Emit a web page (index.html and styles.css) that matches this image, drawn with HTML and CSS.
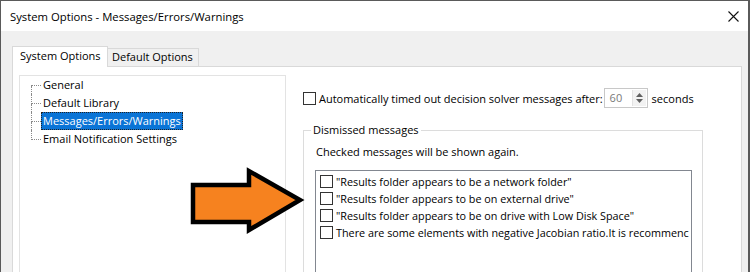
FILE: index.html
```html
<!DOCTYPE html>
<html>
<head>
<meta charset="utf-8">
<link rel="stylesheet" href="styles.css">
</head>
<body>
<div class="window">
  <header class="titlebar">
    <span class="title">System Options - Messages/Errors/Warnings</span>
    <svg class="close" width="11" height="11" viewBox="0 0 11 11"><path d="M0.5 0.5 L10.5 10.5 M10.5 0.5 L0.5 10.5" stroke="#111" stroke-width="1.1" fill="none"/></svg>
  </header>
  <div class="client">
    <div class="tabs">
      <div class="tab active">System Options</div>
      <div class="tab">Default Options</div>
    </div>
    <div class="panel">
      <div class="tree">
        <div class="node first"><span class="conn"><i class="up"></i><i class="down"></i></span><span class="label">General</span></div>
        <div class="node"><span class="conn"><i class="up"></i><i class="down"></i></span><span class="label">Default Library</span></div>
        <div class="node"><span class="conn"><i class="up"></i><i class="down"></i></span><span class="label selected">Messages/Errors/Warnings</span></div>
        <div class="node last"><span class="conn"><i class="up"></i><i class="down"></i></span><span class="label">Email Notification Settings</span></div>
      </div>
      <div class="settings">
        <div class="timeout-row">
          <span class="cb"></span>
          <span class="timeout-text">Automatically timed out decision solver messages after:</span>
          <span class="spin">
            <span class="spin-val">60</span>
            <span class="spin-btn">
              <svg width="7" height="4" viewBox="0 0 7 4"><path d="M0 4 L3.5 0 L7 4 Z" fill="#606060"/></svg>
              <svg width="7" height="4" viewBox="0 0 7 4"><path d="M0 0 L3.5 4 L7 0 Z" fill="#606060"/></svg>
            </span>
          </span>
          <span class="seconds">seconds</span>
        </div>
        <fieldset class="dismissed">
          <legend>Dismissed messages</legend>
          <p class="hint">Checked messages will be shown again.</p>
          <div class="listbox">
            <div class="item"><span class="cb"></span><span class="item-text">"Results folder appears to be a network folder"</span></div>
            <div class="item"><span class="cb"></span><span class="item-text">"Results folder appears to be on external drive"</span></div>
            <div class="item"><span class="cb"></span><span class="item-text">"Results folder appears to be on drive with Low Disk Space"</span></div>
            <div class="item"><span class="cb"></span><span class="item-text">There are some elements with negative Jacobian ratio.It is recommenc</span></div>
          </div>
        </fieldset>
      </div>
    </div>
  </div>
  <svg class="arrow" width="124" height="74" viewBox="0 0 124 74">
    <path d="M7 21 L63 21 L63 7 L114 36 L63 66 L63 58 L7 58 Z" fill="#f6821f" stroke="#000" stroke-width="4.5" stroke-linejoin="miter"/>
  </svg>
</div>
</body>
</html>
```
FILE: styles.css
```css
* { box-sizing: border-box; }
html, body { margin: 0; padding: 0; }
body {
  width: 750px;
  height: 272px;
  overflow: hidden;
  background: #f0f0f0;
  font-family: "Open Sans", "Noto Sans", sans-serif;
  font-size: 11px;
  color: #000;
}
.window {
  position: relative;
  width: 750px;
  height: 272px;
  border-top: 1px solid #5a5a5a;
  border-left: 1px solid #5a5a5a;
  border-right: 2px solid #5a5a5a;
  background: #f0f0f0;
  overflow: hidden;
}
.titlebar {
  height: 30px;
  background: #fff;
  display: flex;
  align-items: center;
  padding-left: 9px;
  padding-right: 9px;
}
.title { font-size: 11.3px; }
.close { margin-left: auto; }
.client {
  padding: 15px 6px 0 11px;
}
.tabs {
  display: flex;
  align-items: flex-end;
  height: 20px;
}
.tab {
  height: 18px;
  width: 91px;
  padding-left: 4px;
  border-top: 1px solid #d9d9d9;
  border-right: 1px solid #d9d9d9;
  background: #f0f0f0;
  line-height: 16px;
  white-space: nowrap;
}
.tab.active {
  position: relative;
  z-index: 1;
  width: 96px;
  height: 21px;
  margin-bottom: -1px;
  padding-left: 7px;
  border-left: 1px solid #d9d9d9;
  background: #fff;
  line-height: 18px;
}
.panel {
  height: 260px;
  border: 1px solid #d9d9d9;
  background: #fff;
  display: grid;
  grid-template-columns: 267px 400px;
  column-gap: 17px;
  align-items: start;
  padding: 8px 0 0 6px;
}
.tree {
  height: 220px;
  border: 1px solid #e3e3e3;
  padding-left: 11px;
}
.node {
  display: flex;
  align-items: center;
  height: 18px;
}
.conn {
  width: 10px;
  height: 18px;
  display: grid;
  grid-template-rows: 10px 8px;
}
.conn i { display: block; }
.conn .up {
  border-left: 1px dotted #8a8a8a;
  border-bottom: 1px dotted #8a8a8a;
}
.conn .down { border-left: 1px dotted #8a8a8a; }
.node.first .conn .up { border-left: none; }
.node.last .conn .down { border-left: none; }
.label {
  padding: 0 2px;
  height: 18px;
  line-height: 17px;
  white-space: nowrap;
}
.label.selected {
  background: #0a74d6;
  color: #fff;
  outline: 1px dotted #222;
  outline-offset: -1px;
}
.timeout-row {
  margin-top: 13px;
  height: 20px;
  display: flex;
  align-items: center;
  white-space: nowrap;
}
.cb {
  flex: none;
  display: inline-block;
  width: 13px;
  height: 13px;
  border: 1px solid #333;
  background: #fff;
}
.timeout-text { margin-left: 3px; letter-spacing: -0.02px; }
.spin {
  margin-left: 1px;
  width: 44px;
  height: 20px;
  border: 1px solid #c8c8c8;
  display: flex;
}
.spin-val {
  flex: 1;
  padding-left: 5px;
  line-height: 17px;
  color: #7a7a7a;
}
.spin-btn {
  width: 14px;
  margin: 1px 1px 1px 0;
  background: #f2f2f2;
  border-left: 1px solid #e2e2e2;
  display: flex;
  flex-direction: column;
  align-items: center;
  justify-content: center;
  gap: 2px;
}
.seconds { margin-left: 4px; }
.dismissed {
  margin: 14px 0 0 0;
  padding: 0;
  width: 400px;
  min-width: 0;
  border: 1px solid #dcdcdc;
}
.dismissed legend {
  margin-left: 7px;
  padding: 0 2px;
  line-height: 16px;
}
.hint {
  margin: 6px 0 0 12px;
  line-height: 16px;
}
.listbox {
  margin: 10px 10px 0 11px;
  height: 130px;
  border: 1px solid #828790;
  padding: 2px 0 0 4px;
  overflow: hidden;
}
.item {
  height: 17px;
  display: flex;
  align-items: center;
  white-space: nowrap;
  font-size: 10.8px;
}
.item .cb { width: 13px; height: 13px; }
.item-text { margin-left: 3px; }
.arrow {
  position: absolute;
  left: 185px;
  top: 163px;
}
```
